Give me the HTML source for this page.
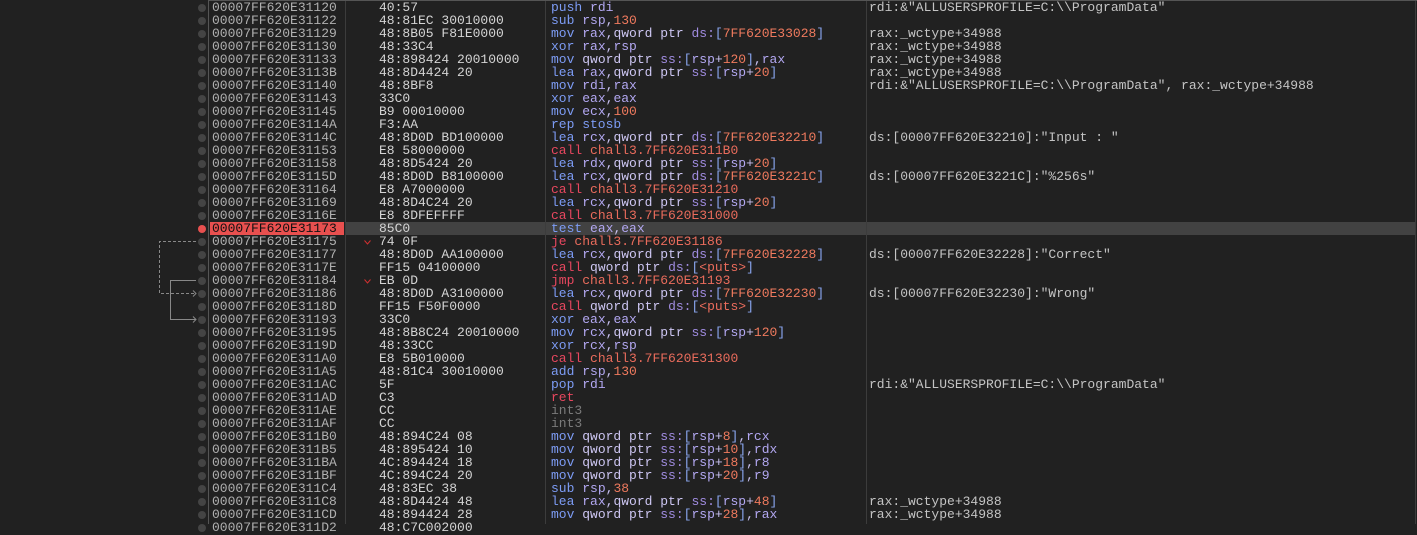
<!DOCTYPE html>
<html><head><meta charset="utf-8"><style>
body{margin:0;width:1417px;height:524px;background:#212121;overflow:hidden;position:relative;font-family:"Liberation Mono",monospace;font-size:13px;}
.row{position:absolute;left:0;width:1417px;height:13px;line-height:13px;white-space:pre;}
.row span{position:absolute;top:0;}
.dot{position:absolute;left:198px;top:3px;width:8px;height:8px;border-radius:50%;background:#444;}
.a{left:212px;color:#b0b0b0;}
.by{left:379px;color:#d4d4d4;}
.d{left:551px;}
.cm{left:869px;color:#c4c4c4;}
.m{color:#7d9cf5}.r{color:#b3a8f2}.k{color:#cdc6f2}.s{color:#a08ce0}.n{color:#ef7a5e}.b{color:#8aa6f0}.c{color:#e8475f}.t{color:#ea6c5c}.g{color:#7a7a7a}.p{color:#c8c0f0}
.vl{position:absolute;top:0;height:524px;width:1px;background:#3c3c3c;}
.hl{position:absolute;left:345px;width:1070px;top:222px;height:13px;background:#424242;}
.bp{position:absolute;left:210px;top:222px;width:134px;height:13px;background:#e8504f;}
.chev{position:absolute;left:364px;top:4px;}
.row b{position:static;font-weight:normal}
</style></head><body>
<div class="hl"></div>
<div class="bp"></div>
<div class="vl" style="left:208px;background:#555"></div>
<div class="vl" style="left:345px"></div>
<div class="vl" style="left:545px"></div>
<div class="vl" style="left:866px"></div>
<div class="vl" style="left:1415px"></div>
<div style="position:absolute;left:208px;top:0;width:1209px;height:1px;background:#555"></div>
<svg style="position:absolute;left:0;top:0" width="210" height="524">
<path d="M196 241.5H159.5V293.5H196" fill="none" stroke="#888" stroke-dasharray="3,2"/>
<path d="M193 290.5l3 3l-3 3" fill="none" stroke="#888"/>
<path d="M196 280.5H170.5V319.5H196" fill="none" stroke="#888"/>
<path d="M193 316.5l3 3l-3 3" fill="none" stroke="#888"/>
</svg>
<div id="rows"></div>
<script>
const R=[
["00007FF620E31120","40:57",'<i class="m">push</i> <i class="r">rdi</i>','rdi:&amp;"ALLUSERSPROFILE=C:\\\\ProgramData"'],
["00007FF620E31122","48:81EC 30010000",'<i class="m">sub</i> <i class="r">rsp</i><i class="p">,</i><i class="n">130</i>',''],
["00007FF620E31129","48:8B05 F81E0000",'<i class="m">mov</i> <i class="r">rax</i><i class="p">,</i><i class="k">qword ptr</i> <i class="s">ds:</i><i class="b">[</i><i class="n">7FF620E33028</i><i class="b">]</i>','rax:_wctype+34988'],
["00007FF620E31130","48:33C4",'<i class="m">xor</i> <i class="r">rax</i><i class="p">,</i><i class="r">rsp</i>','rax:_wctype+34988'],
["00007FF620E31133","48:898424 20010000",'<i class="m">mov</i> <i class="k">qword ptr</i> <i class="s">ss:</i><i class="b">[</i><i class="r">rsp</i><i class="p">+</i><i class="n">120</i><i class="b">]</i><i class="p">,</i><i class="r">rax</i>','rax:_wctype+34988'],
["00007FF620E3113B","48:8D4424 20",'<i class="m">lea</i> <i class="r">rax</i><i class="p">,</i><i class="k">qword ptr</i> <i class="s">ss:</i><i class="b">[</i><i class="r">rsp</i><i class="p">+</i><i class="n">20</i><i class="b">]</i>','rax:_wctype+34988'],
["00007FF620E31140","48:8BF8",'<i class="m">mov</i> <i class="r">rdi</i><i class="p">,</i><i class="r">rax</i>','rdi:&amp;"ALLUSERSPROFILE=C:\\\\ProgramData", rax:_wctype+34988'],
["00007FF620E31143","33C0",'<i class="m">xor</i> <i class="r">eax</i><i class="p">,</i><i class="r">eax</i>',''],
["00007FF620E31145","B9 00010000",'<i class="m">mov</i> <i class="r">ecx</i><i class="p">,</i><i class="n">100</i>',''],
["00007FF620E3114A","F3:AA",'<i class="m">rep stosb</i>',''],
["00007FF620E3114C","48:8D0D BD100000",'<i class="m">lea</i> <i class="r">rcx</i><i class="p">,</i><i class="k">qword ptr</i> <i class="s">ds:</i><i class="b">[</i><i class="n">7FF620E32210</i><i class="b">]</i>','ds:[00007FF620E32210]:"Input : "'],
["00007FF620E31153","E8 58000000",'<i class="c">call</i> <i class="t">chall3.7FF620E311B0</i>',''],
["00007FF620E31158","48:8D5424 20",'<i class="m">lea</i> <i class="r">rdx</i><i class="p">,</i><i class="k">qword ptr</i> <i class="s">ss:</i><i class="b">[</i><i class="r">rsp</i><i class="p">+</i><i class="n">20</i><i class="b">]</i>',''],
["00007FF620E3115D","48:8D0D B8100000",'<i class="m">lea</i> <i class="r">rcx</i><i class="p">,</i><i class="k">qword ptr</i> <i class="s">ds:</i><i class="b">[</i><i class="n">7FF620E3221C</i><i class="b">]</i>','ds:[00007FF620E3221C]:"%256s"'],
["00007FF620E31164","E8 A7000000",'<i class="c">call</i> <i class="t">chall3.7FF620E31210</i>',''],
["00007FF620E31169","48:8D4C24 20",'<i class="m">lea</i> <i class="r">rcx</i><i class="p">,</i><i class="k">qword ptr</i> <i class="s">ss:</i><i class="b">[</i><i class="r">rsp</i><i class="p">+</i><i class="n">20</i><i class="b">]</i>',''],
["00007FF620E3116E","E8 8DFEFFFF",'<i class="c">call</i> <i class="t">chall3.7FF620E31000</i>',''],
["00007FF620E31173","85C0",'<i class="m">test</i> <i class="r">eax</i><i class="p">,</i><i class="r">eax</i>',''],
["00007FF620E31175","74 0F",'<i class="c">je</i> <i class="t">chall3.7FF620E31186</i>',''],
["00007FF620E31177","48:8D0D AA100000",'<i class="m">lea</i> <i class="r">rcx</i><i class="p">,</i><i class="k">qword ptr</i> <i class="s">ds:</i><i class="b">[</i><i class="n">7FF620E32228</i><i class="b">]</i>','ds:[00007FF620E32228]:"Correct"'],
["00007FF620E3117E","FF15 04100000",'<i class="c">call</i> <i class="k">qword ptr</i> <i class="s">ds:</i><i class="b">[</i><i class="t">&lt;puts&gt;</i><i class="b">]</i>',''],
["00007FF620E31184","EB 0D",'<i class="c">jmp</i> <i class="t">chall3.7FF620E31193</i>',''],
["00007FF620E31186","48:8D0D A3100000",'<i class="m">lea</i> <i class="r">rcx</i><i class="p">,</i><i class="k">qword ptr</i> <i class="s">ds:</i><i class="b">[</i><i class="n">7FF620E32230</i><i class="b">]</i>','ds:[00007FF620E32230]:"Wrong"'],
["00007FF620E3118D","FF15 F50F0000",'<i class="c">call</i> <i class="k">qword ptr</i> <i class="s">ds:</i><i class="b">[</i><i class="t">&lt;puts&gt;</i><i class="b">]</i>',''],
["00007FF620E31193","33C0",'<i class="m">xor</i> <i class="r">eax</i><i class="p">,</i><i class="r">eax</i>',''],
["00007FF620E31195","48:8B8C24 20010000",'<i class="m">mov</i> <i class="r">rcx</i><i class="p">,</i><i class="k">qword ptr</i> <i class="s">ss:</i><i class="b">[</i><i class="r">rsp</i><i class="p">+</i><i class="n">120</i><i class="b">]</i>',''],
["00007FF620E3119D","48:33CC",'<i class="m">xor</i> <i class="r">rcx</i><i class="p">,</i><i class="r">rsp</i>',''],
["00007FF620E311A0","E8 5B010000",'<i class="c">call</i> <i class="t">chall3.7FF620E31300</i>',''],
["00007FF620E311A5","48:81C4 30010000",'<i class="m">add</i> <i class="r">rsp</i><i class="p">,</i><i class="n">130</i>',''],
["00007FF620E311AC","5F",'<i class="m">pop</i> <i class="r">rdi</i>','rdi:&amp;"ALLUSERSPROFILE=C:\\\\ProgramData"'],
["00007FF620E311AD","C3",'<i class="c">ret</i>',''],
["00007FF620E311AE","CC",'<i class="g">int3</i>',''],
["00007FF620E311AF","CC",'<i class="g">int3</i>',''],
["00007FF620E311B0","48:894C24 08",'<i class="m">mov</i> <i class="k">qword ptr</i> <i class="s">ss:</i><i class="b">[</i><i class="r">rsp</i><i class="p">+</i><i class="n">8</i><i class="b">]</i><i class="p">,</i><i class="r">rcx</i>',''],
["00007FF620E311B5","48:895424 10",'<i class="m">mov</i> <i class="k">qword ptr</i> <i class="s">ss:</i><i class="b">[</i><i class="r">rsp</i><i class="p">+</i><i class="n">10</i><i class="b">]</i><i class="p">,</i><i class="r">rdx</i>',''],
["00007FF620E311BA","4C:894424 18",'<i class="m">mov</i> <i class="k">qword ptr</i> <i class="s">ss:</i><i class="b">[</i><i class="r">rsp</i><i class="p">+</i><i class="n">18</i><i class="b">]</i><i class="p">,</i><i class="r">r8</i>',''],
["00007FF620E311BF","4C:894C24 20",'<i class="m">mov</i> <i class="k">qword ptr</i> <i class="s">ss:</i><i class="b">[</i><i class="r">rsp</i><i class="p">+</i><i class="n">20</i><i class="b">]</i><i class="p">,</i><i class="r">r9</i>',''],
["00007FF620E311C4","48:83EC 38",'<i class="m">sub</i> <i class="r">rsp</i><i class="p">,</i><i class="n">38</i>',''],
["00007FF620E311C8","48:8D4424 48",'<i class="m">lea</i> <i class="r">rax</i><i class="p">,</i><i class="k">qword ptr</i> <i class="s">ss:</i><i class="b">[</i><i class="r">rsp</i><i class="p">+</i><i class="n">48</i><i class="b">]</i>','rax:_wctype+34988'],
["00007FF620E311CD","48:894424 28",'<i class="m">mov</i> <i class="k">qword ptr</i> <i class="s">ss:</i><i class="b">[</i><i class="r">rsp</i><i class="p">+</i><i class="n">28</i><i class="b">]</i><i class="p">,</i><i class="r">rax</i>','rax:_wctype+34988'],
["00007FF620E311D2","48:C7C002000",'',''],
];
let h='';
const chev='<span class="chev"><svg width="7" height="5"><path d="M0.5 0.5L3.5 4L6.5 0.5" fill="none" stroke="#d03030" stroke-width="1"/></svg></span>';
R.forEach((r,i)=>{
 const bp=i==17;
 h+=`<div class="row" style="top:${i*13+1}px"><div class="dot" style="${bp?'background:#e8504f':''}"></div><span class="a" style="${bp?'color:#111':''}">${r[0]}</span>${(i==18||i==21)?chev:''}<span class="by">${r[1]}</span><span class="d">${r[2]}</span><span class="cm">${r[3]}</span></div>`;
});
document.getElementById('rows').innerHTML=h.replace(/<i /g,'<b ').replace(/<\/i>/g,'</b>');
</script>
</body></html>
